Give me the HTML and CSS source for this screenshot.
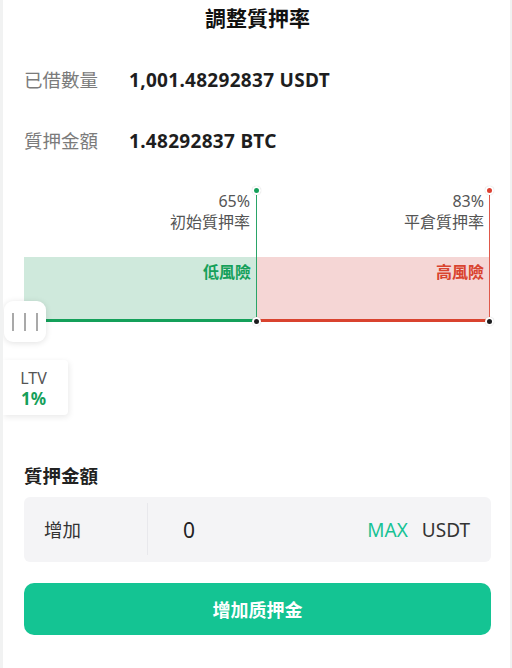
FILE: index.html
```html
<!DOCTYPE html>
<html lang="zh-Hant">
<head>
<meta charset="utf-8">
<title>調整質押率</title>
<link rel="stylesheet" href="styles.css">
</head>
<body>
<div class="page">
  <h1 class="title">調整質押率</h1>

  <div class="info">
    <div class="info-row">
      <span class="info-label">已借數量</span>
      <span class="info-value">1,001.48292837 USDT</span>
    </div>
    <div class="info-row">
      <span class="info-label">質押金額</span>
      <span class="info-value">1.48292837 BTC</span>
    </div>
  </div>

  <div class="chart">
    <div class="col col-low">
      <div class="mark">65%<br>初始質押率</div>
      <div class="zone zone-low">低風險</div>
    </div>
    <div class="col col-high">
      <div class="mark">83%<br>平倉質押率</div>
      <div class="zone zone-high">高風險</div>
    </div>
    <span class="vline vline-green"></span>
    <span class="vline vline-red"></span>
    <span class="dot dot-green"></span>
    <span class="dot dot-red"></span>
    <span class="dot dot-black dot-b1"></span>
    <span class="dot dot-black dot-b2"></span>
    <div class="handle">
      <span class="bar"></span><span class="bar"></span><span class="bar"></span>
    </div>
  </div>

  <div class="ltv">
    <div class="ltv-label">LTV</div>
    <div class="ltv-value">1%</div>
  </div>

  <h2 class="section-title">質押金額</h2>
  <div class="amount">
    <div class="amount-type">增加</div>
    <div class="amount-input">0</div>
    <div class="amount-max">MAX</div>
    <div class="amount-unit">USDT</div>
  </div>

  <button class="submit">增加质押金</button>
</div>
</body>
</html>
```

FILE: styles.css
```css
* { box-sizing: border-box; }
html, body { margin: 0; padding: 0; }
body {
  background: #f1f2f2;
  font-family: "Noto Sans", "Noto Sans CJK TC", sans-serif;
  color: #222;
}
.page {
  margin-left: 3px;
  width: 507px;
  min-height: 668px;
  background: #fff;
  padding: 0 19px 0 21px;
  overflow: hidden;
}
.title {
  margin: 0;
  height: 36px;
  line-height: 36px;
  font-size: 21px;
  font-weight: 700;
  text-align: center;
  color: #111;
}
.info {
  margin-top: 32px;
  display: flex;
  flex-direction: column;
  gap: 37px;
}
.info-row {
  display: flex;
  line-height: 24px;
  height: 24px;
}
.info-label {
  width: 105px;
  font-size: 18.5px;
  color: #7b7b7b;
}
.info-value {
  font-size: 19px;
  letter-spacing: 0.3px;
  font-weight: 700;
  color: #1e1e1e;
}
.chart {
  position: relative;
  margin-top: 31px;
  width: 466px;
  display: grid;
  grid-template-columns: 233px 233px;
}
.mark {
  padding-top: 7px;
  padding-right: 7px;
  height: 73px;
  text-align: right;
  font-size: 16px;
  line-height: 21px;
  color: #555;
}
.col-high .mark { padding-right: 6px; }
.zone {
  height: 65px;
  padding: 5px 6px 0 0;
  text-align: right;
  font-size: 16px;
  line-height: 21px;
  font-weight: 700;
  border-bottom: 3px solid;
}
.zone-low {
  background: #cfe9dc;
  color: #15a05a;
  border-bottom-color: #14a05a;
}
.zone-high {
  background: #f5d6d5;
  color: #d9432f;
  border-bottom-color: #d9432f;
}
.vline {
  position: absolute;
  top: 6px;
  width: 1px;
  height: 131px;
}
.vline-green { left: 232px; background: #2aa468; }
.vline-red { left: 465px; background: #e0584a; }
.dot {
  position: absolute;
  width: 9px;
  height: 9px;
  border-radius: 50%;
  border: 2px solid #fff;
  box-shadow: 0 0 1px rgba(0,0,0,0.25);
}
.dot-green { left: 228px; top: 2px; background: #14a05a; }
.dot-red { left: 461px; top: 2px; background: #dc3f30; }
.dot-black { background: #1c1c1e; top: 133px; }
.dot-b1 { left: 228px; }
.dot-b2 { left: 461px; }
.handle {
  position: absolute;
  left: -20px;
  top: 117px;
  width: 42px;
  height: 41px;
  border-radius: 9px;
  background: #fff;
  box-shadow: 0 1px 6px rgba(0,0,0,0.12);
  display: flex;
  justify-content: center;
  align-items: center;
  gap: 10px;
}
.bar {
  width: 2px;
  height: 18px;
  background: #a9a9a9;
}
.ltv {
  margin-top: 38px;
  margin-left: -21px;
  width: 65px;
  height: 55px;
  background: #fff;
  border-radius: 0 4px 4px 0;
  box-shadow: 1px 2px 6px rgba(0,0,0,0.09);
  padding: 8px 4px 0 0;
  text-align center;
  text-align: center;
}
.ltv-label {
  font-size: 16px;
  line-height: 20px;
  color: #555;
}
.ltv-value {
  font-size: 17px;
  line-height: 21px;
  font-weight: 700;
  color: #15a05a;
}
.section-title {
  margin: 49px 0 0;
  font-size: 18.5px;
  line-height: 24px;
  font-weight: 700;
  color: #222;
}
.amount {
  margin-top: 9px;
  height: 65px;
  background: #f4f4f6;
  border-radius: 6px;
  display: flex;
  align-items: center;
  padding-right: 21px;
}
.amount-type {
  width: 124px;
  padding-left: 20px;
  font-size: 18.5px;
  color: #333;
  align-self: stretch;
  display: flex;
  align-items: center;
  border-right: 1px solid #e8e8ec;
  margin: 6px 0 7px;
}
.amount-input {
  flex: 1;
  padding-left: 35px;
  font-size: 21px;
  color: #222;
}
.amount-max {
  font-size: 19px;
  color: #17c294;
  margin-right: 14px;
}
.amount-unit {
  font-size: 19px;
  color: #333;
}
.submit {
  display: block;
  width: 100%;
  margin-top: 21px;
  height: 52px;
  border: none;
  border-radius: 10px;
  background: #14c493;
  color: #fff;
  font-family: "Noto Sans", "Noto Sans CJK SC", sans-serif;
  font-size: 18px;
  font-weight: 700;
}
```
